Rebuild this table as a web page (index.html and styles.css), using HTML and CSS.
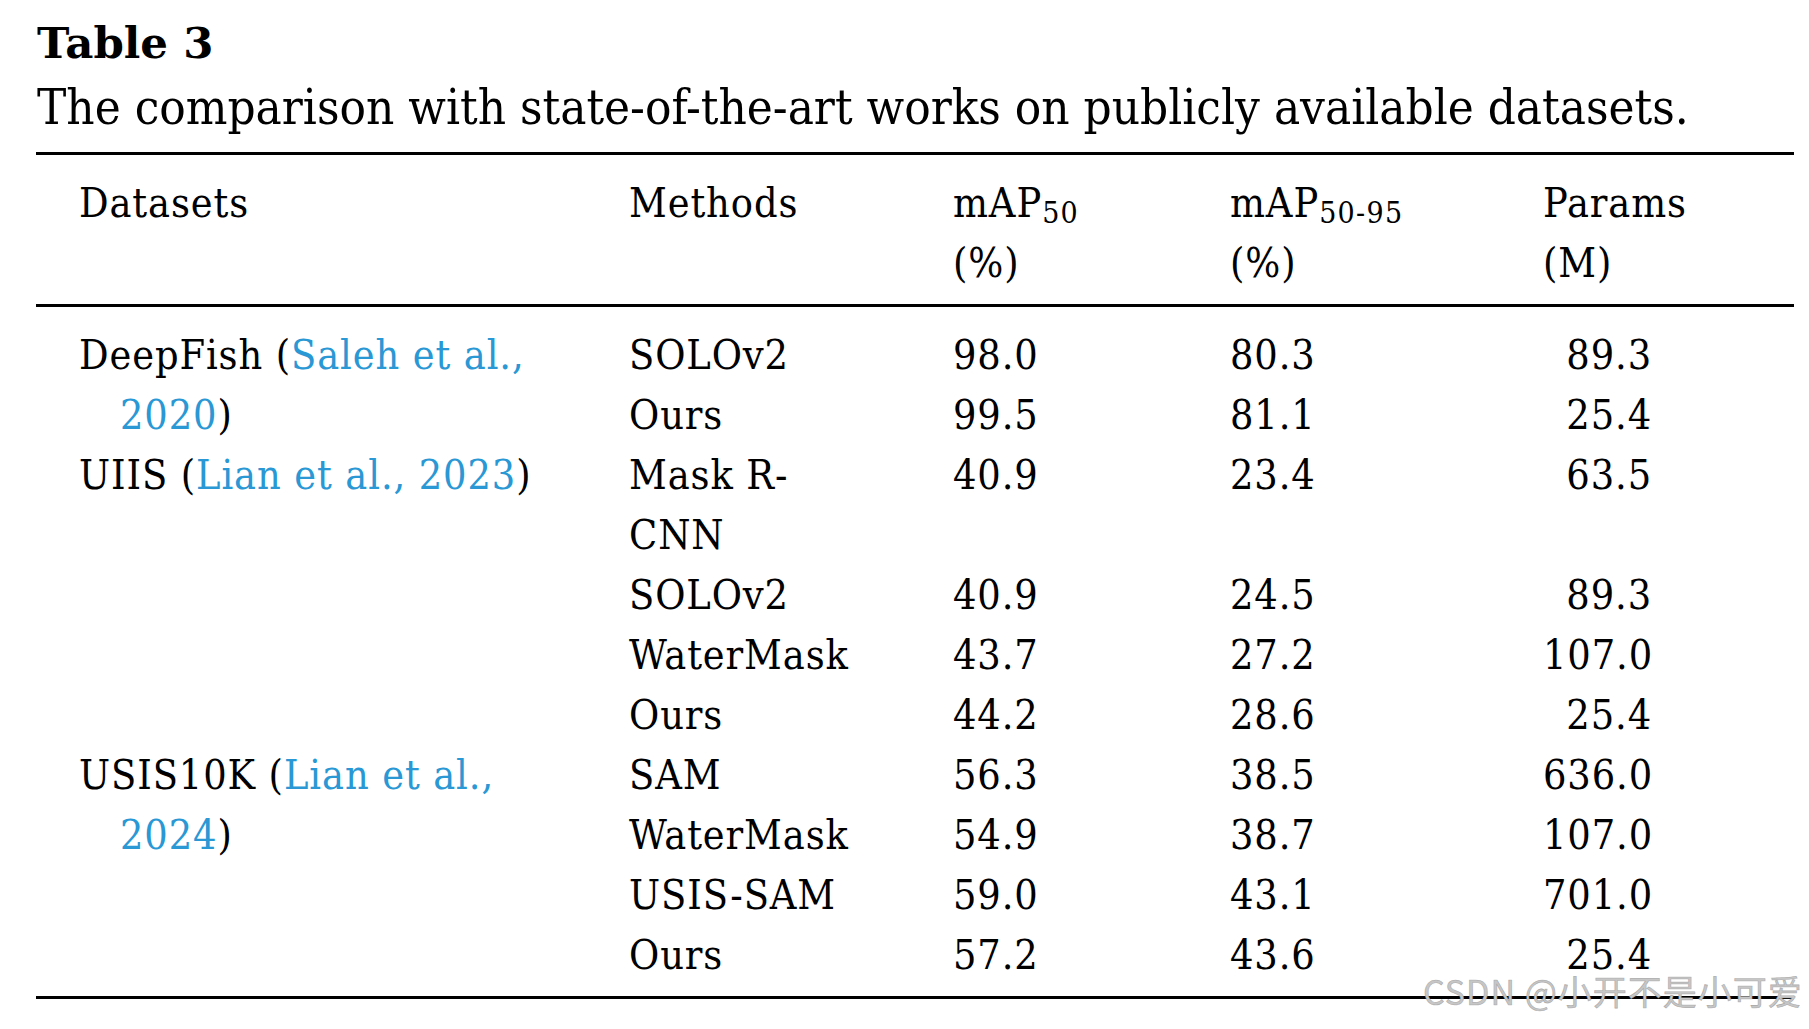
FILE: index.html
```html
<!DOCTYPE html>
<html lang="en">
<head>
<meta charset="utf-8">
<title>Table 3</title>
<link rel="stylesheet" href="styles.css">
</head>
<body>
<div class="page">
  <div class="title">Table 3</div>
  <div class="caption">The comparison with state-of-the-art works on publicly available datasets.</div>
  <table class="tbl">
    <colgroup>
      <col class="c1"><col class="c2"><col class="c3"><col class="c4"><col class="c5">
    </colgroup>
    <thead>
      <tr>
        <th class="ds">Datasets</th>
        <th class="me">Methods</th>
        <th class="nm">mAP<sub>50</sub><br>(%)</th>
        <th class="nm">mAP<sub>50-95</sub><br>(%)</th>
        <th class="pa">Params<br>(M)</th>
      </tr>
    </thead>
    <tbody>
      <tr class="first">
        <td class="ds" rowspan="2">DeepFish (<a class="ref">Saleh et al., 2020</a>)</td>
        <td class="me">SOLOv2</td><td class="nm">98.0</td><td class="nm">80.3</td><td class="pv">89.3</td>
      </tr>
      <tr>
        <td class="me">Ours</td><td class="nm">99.5</td><td class="nm">81.1</td><td class="pv">25.4</td>
      </tr>
      <tr>
        <td class="ds" rowspan="4">UIIS (<a class="ref">Lian et al., 2023</a>)</td>
        <td class="me">Mask R-CNN</td><td class="nm">40.9</td><td class="nm">23.4</td><td class="pv">63.5</td>
      </tr>
      <tr>
        <td class="me">SOLOv2</td><td class="nm">40.9</td><td class="nm">24.5</td><td class="pv">89.3</td>
      </tr>
      <tr>
        <td class="me">WaterMask</td><td class="nm">43.7</td><td class="nm">27.2</td><td class="pv">107.0</td>
      </tr>
      <tr>
        <td class="me">Ours</td><td class="nm">44.2</td><td class="nm">28.6</td><td class="pv">25.4</td>
      </tr>
      <tr>
        <td class="ds last-ds" rowspan="4">USIS10K (<a class="ref">Lian et al., 2024</a>)</td>
        <td class="me">SAM</td><td class="nm">56.3</td><td class="nm">38.5</td><td class="pv">636.0</td>
      </tr>
      <tr>
        <td class="me">WaterMask</td><td class="nm">54.9</td><td class="nm">38.7</td><td class="pv">107.0</td>
      </tr>
      <tr>
        <td class="me">USIS-SAM</td><td class="nm">59.0</td><td class="nm">43.1</td><td class="pv">701.0</td>
      </tr>
      <tr class="last">
        <td class="me">Ours</td><td class="nm">57.2</td><td class="nm">43.6</td><td class="pv">25.4</td>
      </tr>
    </tbody>
  </table>
  <div class="watermark">CSDN @小开不是小可爱</div>
</div>
</body>
</html>
```
FILE: styles.css
```css
html, body {
  margin: 0;
  padding: 0;
  background: #ffffff;
}

body {
  min-height: 100vh;
}

.page {
  position: relative;
  min-height: 1029px;
  box-sizing: border-box;
  padding: 18px 15px 0 36px;
  color: #000000;
  font-family: "DejaVu Serif", "Liberation Serif", serif;
  font-stretch: condensed;
}

.title {
  font-size: 43.5px;
  font-weight: bold;
  font-stretch: normal;
  line-height: 50px;
  padding-left: 1px;
}

.caption {
  margin-top: 10px;
  font-size: 48.9px;
  line-height: 60px;
  padding-left: 1px;
  white-space: nowrap;
}

.tbl {
  margin-top: 14px;
  width: 1758px;
  table-layout: fixed;
  border-collapse: separate;
  border-spacing: 0;
  border-top: 3px solid #000;
  border-bottom: 3px solid #000;
  font-size: 41px;
  line-height: 60px;
  letter-spacing: 0.9px;
}

.c1 { width: 593px; }
.c2 { width: 324px; }
.c3 { width: 277px; }
.c4 { width: 313px; }
.c5 { width: 251px; }

.tbl th,
.tbl td {
  padding: 0;
  text-align: left;
  vertical-align: top;
  font-weight: normal;
}

.tbl th {
  padding-top: 18px;
  padding-bottom: 11px;
  border-bottom: 3px solid #000;
}

.tbl th.ds { padding-left: 43px; }

.tbl td.ds {
  padding-left: 84px;
  padding-right: 40px;
  text-indent: -41px;
}

.tbl td.me { padding-right: 84px; }

.tbl td.pv {
  text-align: right;
  padding-right: 142px;
}

.tbl tr.first td { padding-top: 18px; }
.tbl tr.last td,
.tbl td.last-ds { padding-bottom: 11px; }

.tbl sub {
  font-size: 30px;
  line-height: 0;
  letter-spacing: 1.3px;
  vertical-align: -6px;
}

.ref {
  color: #2a98d4;
  text-decoration: none;
}

.watermark {
  position: absolute;
  z-index: 2;
  left: 1423px;
  top: 966px;
  font-family: "Noto Sans CJK SC", "Noto Sans", sans-serif;
  font-stretch: normal;
  font-size: 34px;
  line-height: 50px;
  letter-spacing: 1px;
  color: #c6c6c6;
  -webkit-text-stroke: 0.6px rgba(140, 140, 140, 0.6);
  white-space: nowrap;
}
```
